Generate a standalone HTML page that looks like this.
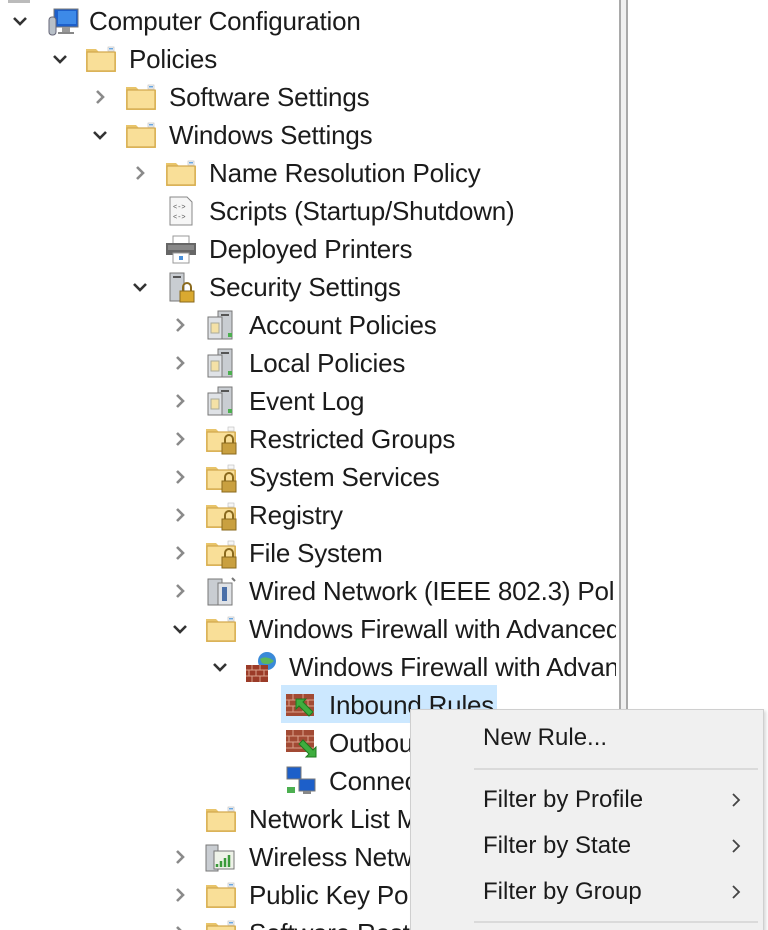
<!DOCTYPE html>
<html><head><meta charset="utf-8">
<style>
html,body{margin:0;padding:0;background:#fff;width:768px;height:930px;overflow:hidden;position:relative;font-family:"Liberation Sans",sans-serif;}
.tree{position:absolute;left:0;top:0;width:616px;height:930px;overflow:hidden;}
.r{position:absolute;height:38px;left:0;width:1200px;}
.t{position:absolute;top:3px;font-size:26px;line-height:32px;color:#1b1b1b;white-space:nowrap;letter-spacing:-0.2px}
.ch{position:absolute;top:9px;width:20px;height:20px}
.ic{position:absolute;top:3px;width:34px;height:32px}
.div1{position:absolute;left:619px;top:0;width:2px;height:930px;background:#a9a9a9}
.div2{position:absolute;left:626px;top:0;width:2px;height:930px;background:#a9a9a9}
.divm{position:absolute;left:621px;top:0;width:5px;height:930px;background:#f0f0f0}
.menu{position:absolute;left:410px;top:709px;width:352px;height:240px;background:#f0f0f0;border:1px solid #cfcfcf;box-shadow:2px 2px 3px rgba(0,0,0,.15)}
.mi{position:absolute;left:72px;font-size:24px;color:#1b1b1b;white-space:nowrap}
.sep{position:absolute;left:63px;width:284px;height:2px;background:#dadada}
.arr{position:absolute;left:318px;width:14px;height:20px}
</style></head><body>
<svg width="0" height="0" style="position:absolute">
<defs>
<symbol id="cd" viewBox="0 0 20 20"><path d="M4 7 L10 13 L16 7" fill="none" stroke="#333" stroke-width="2.6"/></symbol>
<symbol id="cr" viewBox="0 0 20 20"><path d="M7 4 L13 10 L7 16" fill="none" stroke="#8a8a8a" stroke-width="2.6"/></symbol>
<symbol id="fold" viewBox="0 0 34 32"><path d="M2 6 h10 l3 3 h17 v20 h-30 z" fill="#e8c46a"/><path d="M3 9 h28 v19 h-28z" fill="#f9df98" stroke="#d3a94e" stroke-width="1.2"/><rect x="24" y="4" width="6" height="4" fill="#f6f6f6" stroke="#bbb" stroke-width=".6"/><rect x="25" y="5" width="4" height="1.5" fill="#6aa6e0"/></symbol>
<symbol id="lockf" viewBox="0 0 34 32"><path d="M2 6 h10 l3 3 h17 v20 h-30 z" fill="#e8c46a"/><path d="M3 9 h28 v19 h-28z" fill="#f9df98" stroke="#d3a94e" stroke-width="1.2"/><rect x="24" y="4" width="6" height="4" fill="#f6f6f6" stroke="#bbb" stroke-width=".6"/><path d="M21 20 v-4 a4 4 0 0 1 8 0 v4" fill="none" stroke="#8a6a1e" stroke-width="2"/><rect x="18" y="20" width="14" height="11" fill="#c9a040" stroke="#8a6a1e"/></symbol>
<symbol id="srv" viewBox="0 0 34 32"><rect x="14" y="2" width="14" height="28" fill="#c9cdd2" stroke="#777"/><rect x="4" y="8" width="14" height="22" fill="#dfe2e6" stroke="#777"/><rect x="7" y="14" width="8" height="10" fill="#f4e1a6" stroke="#aa9"/><rect x="17" y="5" width="8" height="2" fill="#555"/><rect x="24" y="24" width="4" height="4" fill="#4caf50"/></symbol>
<symbol id="comp" viewBox="0 0 34 32"><rect x="8" y="4" width="24" height="18" fill="#1d5fc9" stroke="#777"/><rect x="12" y="6" width="18" height="13" fill="#3d8ae8"/><rect x="16" y="22" width="8" height="5" fill="#999"/><rect x="12" y="27" width="16" height="2" fill="#888"/><rect x="3" y="12" width="7" height="18" rx="3" fill="#b8c0c8" stroke="#667"/></symbol>
<symbol id="scr" viewBox="0 0 34 32"><path d="M6 2 h17 l5 5 v23 h-22z" fill="#f6f6f6" stroke="#888"/><text x="9" y="14" font-size="7" fill="#555" font-family="Liberation Mono">&lt;-&gt;</text><text x="9" y="24" font-size="7" fill="#555" font-family="Liberation Mono">&lt;-&gt;</text></symbol>
<symbol id="prn" viewBox="0 0 34 32"><rect x="9" y="3" width="16" height="8" fill="#fff" stroke="#999"/><rect x="2" y="10" width="30" height="12" fill="#666"/><rect x="4" y="12" width="26" height="5" fill="#888"/><rect x="9" y="20" width="16" height="10" fill="#fff" stroke="#999"/><rect x="15" y="23" width="4" height="4" fill="#4a90d9"/></symbol>
<symbol id="secs" viewBox="0 0 34 32"><rect x="6" y="2" width="14" height="28" fill="#c9cdd2" stroke="#777"/><rect x="9" y="5" width="8" height="2" fill="#555"/><path d="M19 20 v-4 a4 4 0 0 1 8 0 v4" fill="none" stroke="#8a6a1e" stroke-width="2"/><rect x="16" y="20" width="14" height="11" fill="#d9a930" stroke="#8a6a1e"/></symbol>
<symbol id="wired" viewBox="0 0 34 32"><rect x="4" y="4" width="14" height="26" fill="#c9cdd2" stroke="#777"/><rect x="14" y="8" width="14" height="22" fill="#dfe2e6" stroke="#777"/><rect x="18" y="12" width="5" height="14" fill="#4a6fa8"/><path d="M28 3 l3 3" stroke="#777" stroke-width="2"/></symbol>
<symbol id="fw" viewBox="0 0 34 32"><circle cx="23" cy="10" r="9" fill="#3a8ad8"/><path d="M16 8 q6 -4 14 2 q-5 5 -12 2z" fill="#5cb85c"/><rect x="2" y="14" width="22" height="17" fill="#9b3b28"/><path d="M2 19 h22 M2 25 h22 M8 14 v5 M16 14 v5 M5 19 v6 M12 19 v6 M20 19 v6 M8 25 v6 M16 25 v6" stroke="#d9a08a" stroke-width="1"/></symbol>
<symbol id="inb" viewBox="0 0 34 32"><rect x="2" y="5" width="28" height="22" fill="#a24a34"/><path d="M2 11 h28 M2 17 h28 M2 23 h28 M9 5 v6 M19 5 v6 M5 11 v6 M14 11 v6 M24 11 v6 M9 17 v6 M19 17 v6" stroke="#d9a08a" stroke-width="1"/><path d="M12 10 l10 0 -3 3 10 10 -4 4 -10 -10 -3 3z" fill="#3fae3f" stroke="#1f7a1f"/></symbol>
<symbol id="outb" viewBox="0 0 34 32"><rect x="2" y="3" width="28" height="22" fill="#a24a34"/><path d="M2 9 h28 M2 15 h28 M2 21 h28 M9 3 v6 M19 3 v6 M5 9 v6 M14 9 v6 M24 9 v6 M9 15 v6 M19 15 v6" stroke="#d9a08a" stroke-width="1"/><path d="M32 30 l-10 0 3 -3 -10 -10 4 -4 10 10 3 -3z" fill="#3fae3f" stroke="#1f7a1f"/></symbol>
<symbol id="conn" viewBox="0 0 34 32"><rect x="3" y="2" width="14" height="12" fill="#1d5fc9" stroke="#777"/><rect x="15" y="14" width="16" height="12" fill="#1d5fc9" stroke="#777"/><rect x="19" y="26" width="8" height="3" fill="#888"/><rect x="3" y="22" width="8" height="6" fill="#4caf50"/></symbol>
<symbol id="wl" viewBox="0 0 34 32"><rect x="2" y="4" width="12" height="26" fill="#c9cdd2" stroke="#777"/><rect x="10" y="10" width="20" height="18" fill="#eef2e8" stroke="#777"/><path d="M13 26 v-3 M17 26 v-6 M21 26 v-9 M25 26 v-12" stroke="#3a9a3a" stroke-width="2.5"/></symbol>
<symbol id="ar" viewBox="0 0 14 20"><path d="M4 4 L10 10 L4 16" fill="none" stroke="#444" stroke-width="1.8"/></symbol>
</defs></svg>

<div style="position:absolute;left:8px;top:0;width:22px;height:3px;background:#bbb"></div>
<div class="tree">
<div class="r" style="top:2px"><svg class="ch" style="left:10px"><use href="#cd"/></svg><svg class="ic" style="left:46px"><use href="#comp"/></svg><div class="t" style="left:89px">Computer Configuration</div></div>
<div class="r" style="top:40px"><svg class="ch" style="left:50px"><use href="#cd"/></svg><svg class="ic" style="left:84px"><use href="#fold"/></svg><div class="t" style="left:129px">Policies</div></div>
<div class="r" style="top:78px"><svg class="ch" style="left:90px"><use href="#cr"/></svg><svg class="ic" style="left:124px"><use href="#fold"/></svg><div class="t" style="left:169px">Software Settings</div></div>
<div class="r" style="top:116px"><svg class="ch" style="left:90px"><use href="#cd"/></svg><svg class="ic" style="left:124px"><use href="#fold"/></svg><div class="t" style="left:169px">Windows Settings</div></div>
<div class="r" style="top:154px"><svg class="ch" style="left:130px"><use href="#cr"/></svg><svg class="ic" style="left:164px"><use href="#fold"/></svg><div class="t" style="left:209px">Name Resolution Policy</div></div>
<div class="r" style="top:192px"><svg class="ic" style="left:164px"><use href="#scr"/></svg><div class="t" style="left:209px">Scripts (Startup/Shutdown)</div></div>
<div class="r" style="top:230px"><svg class="ic" style="left:164px"><use href="#prn"/></svg><div class="t" style="left:209px">Deployed Printers</div></div>
<div class="r" style="top:268px"><svg class="ch" style="left:130px"><use href="#cd"/></svg><svg class="ic" style="left:164px"><use href="#secs"/></svg><div class="t" style="left:209px">Security Settings</div></div>
<div class="r" style="top:306px"><svg class="ch" style="left:170px"><use href="#cr"/></svg><svg class="ic" style="left:204px"><use href="#srv"/></svg><div class="t" style="left:249px">Account Policies</div></div>
<div class="r" style="top:344px"><svg class="ch" style="left:170px"><use href="#cr"/></svg><svg class="ic" style="left:204px"><use href="#srv"/></svg><div class="t" style="left:249px">Local Policies</div></div>
<div class="r" style="top:382px"><svg class="ch" style="left:170px"><use href="#cr"/></svg><svg class="ic" style="left:204px"><use href="#srv"/></svg><div class="t" style="left:249px">Event Log</div></div>
<div class="r" style="top:420px"><svg class="ch" style="left:170px"><use href="#cr"/></svg><svg class="ic" style="left:204px"><use href="#lockf"/></svg><div class="t" style="left:249px">Restricted Groups</div></div>
<div class="r" style="top:458px"><svg class="ch" style="left:170px"><use href="#cr"/></svg><svg class="ic" style="left:204px"><use href="#lockf"/></svg><div class="t" style="left:249px">System Services</div></div>
<div class="r" style="top:496px"><svg class="ch" style="left:170px"><use href="#cr"/></svg><svg class="ic" style="left:204px"><use href="#lockf"/></svg><div class="t" style="left:249px">Registry</div></div>
<div class="r" style="top:534px"><svg class="ch" style="left:170px"><use href="#cr"/></svg><svg class="ic" style="left:204px"><use href="#lockf"/></svg><div class="t" style="left:249px">File System</div></div>
<div class="r" style="top:572px"><svg class="ch" style="left:170px"><use href="#cr"/></svg><svg class="ic" style="left:204px"><use href="#wired"/></svg><div class="t" style="left:249px">Wired Network (IEEE 802.3) Policies</div></div>
<div class="r" style="top:610px"><svg class="ch" style="left:170px"><use href="#cd"/></svg><svg class="ic" style="left:204px"><use href="#fold"/></svg><div class="t" style="left:249px">Windows Firewall with Advanced Security</div></div>
<div class="r" style="top:648px"><svg class="ch" style="left:210px"><use href="#cd"/></svg><svg class="ic" style="left:244px"><use href="#fw"/></svg><div class="t" style="left:289px">Windows Firewall with Advanced Security</div></div>
<div style="position:absolute;left:281px;top:685px;width:216px;height:38px;background:#cce8ff"></div>
<div class="r" style="top:686px"><svg class="ic" style="left:284px"><use href="#inb"/></svg><div class="t" style="left:329px">Inbound Rules</div></div>
<div class="r" style="top:724px"><svg class="ic" style="left:284px"><use href="#outb"/></svg><div class="t" style="left:329px">Outbound Rules</div></div>
<div class="r" style="top:762px"><svg class="ic" style="left:284px"><use href="#conn"/></svg><div class="t" style="left:329px">Connection Security Rules</div></div>
<div class="r" style="top:800px"><svg class="ic" style="left:204px"><use href="#fold"/></svg><div class="t" style="left:249px">Network List Manager Policies</div></div>
<div class="r" style="top:838px"><svg class="ch" style="left:170px"><use href="#cr"/></svg><svg class="ic" style="left:204px"><use href="#wl"/></svg><div class="t" style="left:249px">Wireless Network (IEEE 802.11) Policies</div></div>
<div class="r" style="top:876px"><svg class="ch" style="left:170px"><use href="#cr"/></svg><svg class="ic" style="left:204px"><use href="#fold"/></svg><div class="t" style="left:249px">Public Key Policies</div></div>
<div class="r" style="top:914px"><svg class="ch" style="left:170px"><use href="#cr"/></svg><svg class="ic" style="left:204px"><use href="#fold"/></svg><div class="t" style="left:249px">Software Restriction Policies</div></div>
</div>
<div class="div1"></div><div class="divm"></div><div class="div2"></div>

<div class="menu">
<div class="mi" style="top:14px">New Rule...</div>
<div class="sep" style="top:58px"></div>
<div class="mi" style="top:76px">Filter by Profile</div><svg class="arr" style="top:80px"><use href="#ar"/></svg>
<div class="mi" style="top:122px">Filter by State</div><svg class="arr" style="top:126px"><use href="#ar"/></svg>
<div class="mi" style="top:168px">Filter by Group</div><svg class="arr" style="top:172px"><use href="#ar"/></svg>
<div class="sep" style="top:211px"></div>
</div>
</body></html>
